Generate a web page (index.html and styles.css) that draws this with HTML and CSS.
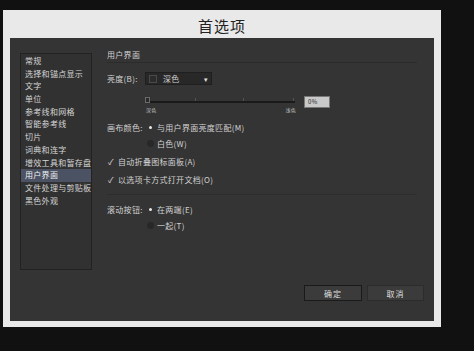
FILE: index.html
```html
<!DOCTYPE html>
<html>
<head>
    <title>首选项</title>
    <link rel="stylesheet" href="styles.css">
</head>
<body>
    <div class="dialog">
        <div class="title">首选项</div>
        <div class="panel">
            <div class="main">
                <ul class="nav">
                    <li>常规</li>
                    <li>选择和锚点显示</li>
                    <li>文字</li>
                    <li>单位</li>
                    <li>参考线和网格</li>
                    <li>智能参考线</li>
                    <li>切片</li>
                    <li>词典和连字</li>
                    <li>增效工具和暂存盘</li>
                    <li class="active">用户界面</li>
                    <li>文件处理与剪贴板</li>
                    <li>黑色外观</li>
                </ul>
                <div class="content">
                    <div class="section-title">用户界面</div>

                    <div class="row bright">
                        <span class="label">亮度(B):</span>
                        <div class="select">
                            <span class="swatch"></span>
                            <span class="select-text">深色</span>
                            <span class="arrow">▾</span>
                        </div>
                    </div>

                    <div class="slider-row">
                        <div class="slider">
                            <div class="track">
                                <span class="thumb"></span>
                                <span class="tick t1"></span>
                                <span class="tick t2"></span>
                                <span class="tick t3"></span>
                            </div>
                            <div class="slider-labels">
                                <span>深色</span>
                                <span>浅色</span>
                            </div>
                        </div>
                        <div class="percent">0%</div>
                    </div>

                    <div class="row canvas">
                        <span class="label">画布颜色:</span>
                        <span class="radio on"></span>
                        <span>与用户界面亮度匹配(M)</span>
                    </div>
                    <div class="row sub">
                        <span class="radio"></span>
                        <span>白色(W)</span>
                    </div>

                    <div class="row check">
                        <span class="tick-mark">✓</span>
                        <span>自动折叠图标面板(A)</span>
                    </div>
                    <div class="row check">
                        <span class="tick-mark">✓</span>
                        <span>以选项卡方式打开文档(O)</span>
                    </div>

                    <div class="separator"></div>

                    <div class="row scroll">
                        <span class="label">滚动按钮:</span>
                        <span class="radio on"></span>
                        <span>在两端(E)</span>
                    </div>
                    <div class="row sub">
                        <span class="radio"></span>
                        <span>一起(T)</span>
                    </div>
                </div>
            </div>
            <div class="footer">
                <button class="btn primary">确定</button>
                <button class="btn">取消</button>
            </div>
        </div>
    </div>
</body>
</html>
```

FILE: styles.css
```css
html, body {
    margin: 0;
    height: 100%;
}

body {
    background-color: #111111;
    font-family: "Noto Sans CJK SC", "Noto Sans", sans-serif;
    color: #d2d2d2;
    padding: 10px 0 0 3px;
    box-sizing: border-box;
}

.dialog {
    width: 438px;
    height: 317px;
    background-color: #e9e9e9;
    display: flex;
    flex-direction: column;
    box-sizing: border-box;
    padding: 0 7px 6px 7px;
}

.title {
    height: 28px;
    line-height: 31px;
    text-align: center;
    font-size: 15px;
    color: #222222;
    letter-spacing: 1px;
}

.panel {
    flex: 1;
    background-color: #343434;
    display: flex;
    flex-direction: column;
    padding: 10px 10px 0 10px;
    font-size: 8px;
    letter-spacing: 0.3px;
}

.main {
    display: flex;
}

/* left list */
.nav {
    list-style: none;
    margin: 5px 0 0 0;
    padding: 1px 0 0 0;
    width: 72px;
    height: 217px;
    box-sizing: border-box;
    border: 1px solid #222222;
    background-color: #313131;
}

.nav li {
    height: 12.7px;
    line-height: 12.7px;
    padding-left: 4px;
    white-space: nowrap;
    color: #d6d6d6;
}

.nav li.active {
    background-color: #4b5263;
    color: #f0f0f0;
}

/* right side */
.content {
    margin-left: 15px;
    width: 310px;
    display: flex;
    flex-direction: column;
}

.section-title {
    height: 14px;
    line-height: 14px;
    border-bottom: 1px solid #2b2b2b;
}

.row {
    display: flex;
    align-items: center;
    height: 14px;
    white-space: nowrap;
}

.label {
    width: 38px;
}

.bright {
    margin-top: 9px;
    height: 13px;
}

.select {
    width: 67px;
    height: 13px;
    box-sizing: border-box;
    background-color: #282828;
    border: 1px solid #1f1f1f;
    display: flex;
    align-items: center;
    padding: 0 3px;
}

.swatch {
    width: 8px;
    height: 8px;
    box-sizing: border-box;
    border: 1px solid #4a4a4a;
    background-color: #2c2c2c;
}

.select-text {
    margin-left: 6px;
    flex: 1;
}

.arrow {
    font-size: 7px;
    color: #e0e0e0;
}

/* slider */
.slider-row {
    display: flex;
    align-items: flex-start;
    margin-top: 10px;
}

.slider {
    margin-left: 39px;
    width: 149px;
}

.track {
    position: relative;
    height: 10px;
}

.track:before {
    content: "";
    position: absolute;
    left: 0;
    right: 0;
    top: 6px;
    height: 2px;
    background-color: #1a1a1a;
}

.thumb {
    position: absolute;
    left: -1px;
    top: 2px;
    width: 3px;
    height: 4px;
    background-color: #2a2a2a;
    border: 1px solid #6a6a6a;
}

.tick {
    position: absolute;
    top: 3px;
    width: 1px;
    height: 3px;
    background-color: #555555;
}

.t1 { left: 49px; }
.t2 { left: 97px; }
.t3 { left: 147px; }

.slider-labels {
    display: flex;
    justify-content: space-between;
    font-size: 5px;
    line-height: 9px;
    color: #bdbdbd;
    margin-right: -1px;
}

.percent {
    margin-left: 9px;
    margin-top: 1px;
    width: 26px;
    height: 12px;
    box-sizing: border-box;
    background-color: #c9c9c9;
    border: 1px solid #777777;
    color: #222222;
    font-size: 6px;
    line-height: 10px;
    padding-left: 3px;
}

.canvas {
    margin-top: 6px;
}

.sub {
    margin-top: 2px;
    padding-left: 38px;
}

.radio {
    width: 7px;
    height: 7px;
    border-radius: 50%;
    background-color: #282828;
    margin: 0 3px 0 2px;
    position: relative;
}

.radio.on {
    background-color: transparent;
}

.radio.on:after {
    content: "";
    position: absolute;
    left: 2px;
    top: 2px;
    width: 3px;
    height: 3px;
    border-radius: 50%;
    background-color: #e8e8e8;
}

.check {
    margin-top: 4px;
}

.tick-mark {
    width: 10px;
    margin-left: 1px;
    font-size: 8px;
    color: #e0e0e0;
}

.separator {
    margin-top: 8px;
    height: 1px;
    background-color: #2d2d2d;
}

.scroll {
    margin-top: 7px;
}

/* buttons */
.footer {
    display: flex;
    justify-content: flex-end;
    gap: 5px;
    margin-top: 15px;
}

.btn {
    width: 57px;
    height: 16px;
    background-color: #3b3b3b;
    border: 1px solid #2c2c2c;
    color: #dedede;
    font-family: "Noto Sans CJK SC", sans-serif;
    font-size: 8px;
    letter-spacing: 1px;
    padding: 0;
}

.btn.primary {
    width: 58px;
    border-color: #1a1a1a;
}
```
